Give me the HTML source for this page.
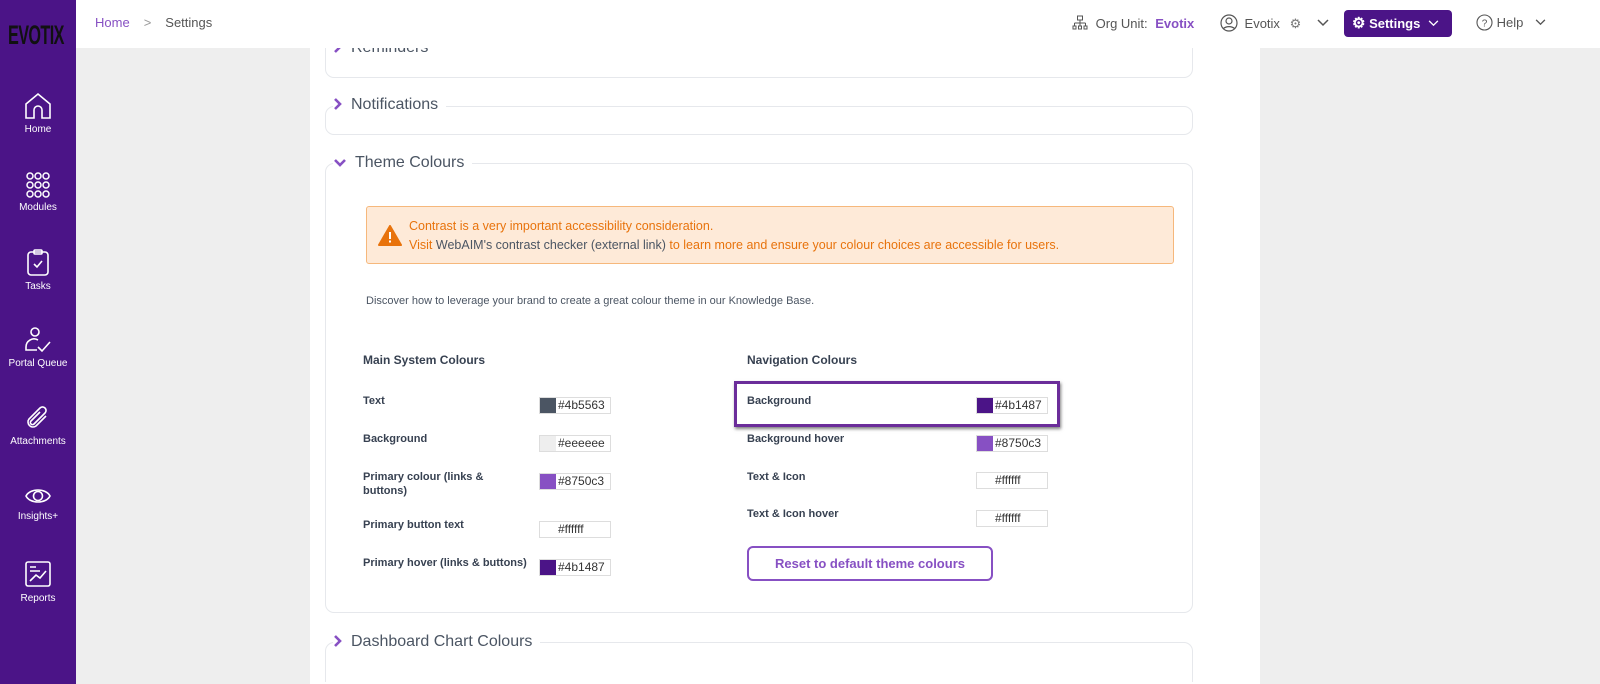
<!DOCTYPE html>
<html><head><meta charset="utf-8"><style>
*{box-sizing:border-box;margin:0;padding:0}
html,body{width:1600px;height:684px;overflow:hidden}
body{font-family:"Liberation Sans",sans-serif;background:#eee;position:relative;color:#4b5563}
#wrap{position:absolute;left:0;top:0;width:1600px;height:684px;overflow:hidden}
.abs{position:absolute}
#side{left:0;top:0;width:76px;height:684px;background:#4b1487;z-index:5}
#hdr{left:76px;top:0;width:1524px;height:48px;background:#fff;z-index:5}
.logo{left:8px;top:22px;font-family:"Liberation Sans",sans-serif;font-weight:bold;font-size:27px;color:#111;letter-spacing:-1px;transform:scaleX(.6);transform-origin:left;line-height:1}
.nav{width:76px;text-align:center;color:#fff;font-size:10px;left:0}
.nav svg{display:block;margin:0 auto 4px}
#panel{left:310px;top:48px;width:950px;height:636px;background:#fff}
.card{position:absolute;left:325px;width:868px;border:1px solid #e6e8ec;border-radius:9px}
.leg{position:absolute;background:#fff;font-size:16px;color:#4b5563;padding-right:8px;line-height:20px}
.chev{display:inline-block;margin-right:8px;vertical-align:-1px}
.lbl{position:absolute;font-size:11px;font-weight:bold;color:#374151}
.sw{position:absolute;width:72px;height:17px;border:1px solid #ddd;background:#fff;font-size:12px;color:#333;padding-left:18px;line-height:15px}
.sw i{position:absolute;left:0;top:0;width:16px;height:15px}
</style></head><body><div id="wrap">
<div id="side" class="abs">
<div class="abs logo">EVOTIX</div>
<div class="abs nav" style="top:92px"><svg width="26" height="28" viewBox="0 0 26 28" fill="none" stroke="#fff" stroke-width="1.6"><path d="M1 12 L13 2 L25 12 V26 H17 V18 a4 4 0 0 0-8 0 V26 H1Z"/></svg>Home</div>
<div class="abs nav" style="top:172px"><svg width="26" height="26" viewBox="0 0 26 26" fill="none" stroke="#fff" stroke-width="1.5"><circle cx="5" cy="4" r="3"/><circle cx="13" cy="4" r="3"/><circle cx="21" cy="4" r="3"/><circle cx="5" cy="13" r="3"/><circle cx="13" cy="13" r="3"/><circle cx="21" cy="13" r="3"/><circle cx="5" cy="22" r="3"/><circle cx="13" cy="22" r="3"/><circle cx="21" cy="22" r="3"/></svg>Modules</div>
<div class="abs nav" style="top:249px"><svg width="24" height="28" viewBox="0 0 24 28" fill="none" stroke="#fff" stroke-width="1.6"><rect x="2" y="3" width="20" height="23" rx="3"/><rect x="8" y="1" width="8" height="4" rx="1"/><path d="M8 15l3 3 5-6"/></svg>Tasks</div>
<div class="abs nav" style="top:326px"><svg width="28" height="28" viewBox="0 0 28 28" fill="none" stroke="#fff" stroke-width="1.6"><circle cx="11" cy="6" r="4"/><path d="M13 24H2v-3a8 8 0 0 1 12-7"/><path d="M14 21l4 4 8-9"/></svg>Portal Queue</div>
<div class="abs nav" style="top:404px"><svg width="28" height="28" viewBox="0 0 28 28" fill="none" stroke="#fff" stroke-width="1.6"><path d="M22 12L12 22a5 5 0 0 1-7-7L16 4a3.5 3.5 0 0 1 5 5L10 20a2 2 0 0 1-3-3l9-9"/></svg>Attachments</div>
<div class="abs nav" style="top:485px"><svg width="28" height="22" viewBox="0 0 28 22" fill="none" stroke="#fff" stroke-width="1.6"><path d="M2 11C6 3 22 3 26 11 22 19 6 19 2 11Z"/><circle cx="14" cy="11" r="4.5"/></svg>Insights+</div>
<div class="abs nav" style="top:561px"><svg width="26" height="28" viewBox="0 0 26 28" fill="none" stroke="#fff" stroke-width="1.6"><rect x="1" y="1" width="24" height="24" rx="2"/><path d="M5 6h6M5 10h10M5 20l6-6 4 3 6-7"/></svg>Reports</div>
</div>
<div id="hdr" class="abs">
<div class="abs" style="left:19px;top:15px;font-size:13px"><span style="color:#8750c3">Home</span><span style="color:#999;margin:0 14px">&gt;</span><span style="color:#555">Settings</span></div>
<div class="abs" style="left:996px;top:14px;font-size:13px;color:#555;white-space:nowrap">
<svg width="16" height="16" viewBox="0 0 16 16" fill="none" stroke="#555" stroke-width="1" style="vertical-align:-3px"><rect x="5.5" y="1" width="5" height="4"/><path d="M8 5v3M2.5 8h11M2.5 8v3M8 8v3M13.5 8v3"/><rect x="1" y="11" width="3" height="3"/><rect x="6.5" y="11" width="3" height="3"/><rect x="12" y="11" width="3" height="3"/></svg>
<span style="margin-left:4px">Org Unit:</span> <b style="color:#8750c3;margin-left:4px">Evotix</b>
<svg width="18" height="18" viewBox="0 0 18 18" fill="none" stroke="#555" stroke-width="1.2" style="vertical-align:-4px;margin-left:22px"><circle cx="9" cy="9" r="8"/><circle cx="9" cy="7" r="3"/><path d="M3.5 14.5a7 5 0 0 1 11 0"/></svg>
<span style="margin-left:3px">Evotix</span>
<span style="margin-left:6px;color:#777">⚙</span>
<svg width="12" height="8" viewBox="0 0 12 8" style="margin-left:12px;vertical-align:1px" fill="none" stroke="#555" stroke-width="1.5"><path d="M1 1l5 5 5-5"/></svg>
</div>
<div class="abs" style="left:1268px;top:10px;width:108px;height:27px;background:#4b1487;border-radius:4px;color:#fff;font-weight:bold;font-size:13px;line-height:27px;padding-left:8px"><span style="font-size:15px">⚙</span> Settings <svg width="11" height="7" viewBox="0 0 12 8" style="margin-left:4px;vertical-align:1px" fill="none" stroke="#fff" stroke-width="1.5"><path d="M1 1l5 5 5-5"/></svg></div>
<div class="abs" style="left:1400px;top:14px;font-size:13px;color:#555"><svg width="17" height="17" viewBox="0 0 17 17" fill="none" stroke="#555" stroke-width="1.1" style="vertical-align:-4px"><circle cx="8.5" cy="8.5" r="7.5"/><text x="8.5" y="12.5" font-size="10" text-anchor="middle" fill="#555" stroke="none" font-family="Liberation Sans">?</text></svg> Help <svg width="11" height="7" viewBox="0 0 12 8" style="margin-left:8px;vertical-align:1px" fill="none" stroke="#555" stroke-width="1.5"><path d="M1 1l5 5 5-5"/></svg></div>
</div>
<div id="panel" class="abs"></div>
<div class="card" style="top:20px;height:58px"></div>
<div class="leg" style="left:333px;top:38px;"><svg class="chev" width="10" height="12" viewBox="0 0 10 12"><path d="M2 1l5 5-5 5" fill="none" stroke="#8750c3" stroke-width="2.6"/></svg>Reminders</div>
<div class="card" style="top:106px;height:29px"></div>
<div class="leg" style="left:333px;top:95px"><svg class="chev" width="10" height="12" viewBox="0 0 10 12"><path d="M2 1l5 5-5 5" fill="none" stroke="#8750c3" stroke-width="2.6"/></svg>Notifications</div>
<div class="card" style="top:163px;height:450px"></div>
<div class="leg" style="left:333px;top:153px"><svg class="chev" width="14" height="10" viewBox="0 0 14 10"><path d="M2 2l5 5 5-5" fill="none" stroke="#8750c3" stroke-width="2.6"/></svg>Theme Colours</div>
<div class="abs" style="left:366px;top:206px;width:808px;height:58px;background:#feead8;border:1px solid #f6b87c;border-radius:3px;font-size:12.5px;color:#e8730c;line-height:19px;padding:10px 0 0 42px">
<svg class="abs" style="left:11px;top:18px" width="24" height="21" viewBox="0 0 24 21"><path d="M12 1L23 20H1Z" fill="#e8730c" stroke="#e8730c" stroke-linejoin="round" stroke-width="2"/><rect x="11" y="7" width="2" height="7" fill="#fff"/><rect x="11" y="15.5" width="2" height="2" fill="#fff"/></svg>
Contrast is a very important accessibility consideration.<br>Visit <span style="color:#4b5563">WebAIM's contrast checker (external link)</span> to learn more and ensure your colour choices are accessible for users.</div>
<div class="abs" style="left:366px;top:295px;font-size:11px;color:#4b5563">Discover how to leverage your brand to create a great colour theme in our Knowledge Base.</div>
<div class="lbl" style="left:363px;top:353px;font-size:12px">Main System Colours</div>
<div class="lbl" style="left:747px;top:353px;font-size:12px">Navigation Colours</div>
<div class="lbl" style="left:363px;top:395px">Text</div>
<div class="sw" style="left:539px;top:397px"><i style="background:#4b5563"></i>#4b5563</div>
<div class="lbl" style="left:363px;top:433px">Background</div>
<div class="sw" style="left:539px;top:435px"><i style="background:#eee"></i>#eeeeee</div>
<div class="lbl" style="left:363px;top:470px;line-height:14px">Primary colour (links &amp;<br>buttons)</div>
<div class="sw" style="left:539px;top:473px"><i style="background:#8750c3"></i>#8750c3</div>
<div class="lbl" style="left:363px;top:519px">Primary button text</div>
<div class="sw" style="left:539px;top:521px"><i></i>#ffffff</div>
<div class="lbl" style="left:363px;top:557px">Primary hover (links &amp; buttons)</div>
<div class="sw" style="left:539px;top:559px"><i style="background:#4b1487"></i>#4b1487</div>
<div class="abs" style="left:734px;top:381px;width:326px;height:46px;border:3px solid #6b2d9a;box-shadow:1px 2px 3px rgba(0,0,0,.5)"></div>
<div class="lbl" style="left:747px;top:395px">Background</div>
<div class="sw" style="left:976px;top:397px"><i style="background:#4b1487"></i>#4b1487</div>
<div class="lbl" style="left:747px;top:433px">Background hover</div>
<div class="sw" style="left:976px;top:435px"><i style="background:#8750c3"></i>#8750c3</div>
<div class="lbl" style="left:747px;top:471px">Text &amp; Icon</div>
<div class="sw" style="left:976px;top:472px"><i></i>#ffffff</div>
<div class="lbl" style="left:747px;top:508px">Text &amp; Icon hover</div>
<div class="sw" style="left:976px;top:510px"><i></i>#ffffff</div>
<div class="abs" style="left:747px;top:546px;width:246px;height:35px;border:2px solid #8750c3;border-radius:6px;color:#8750c3;font-weight:bold;font-size:13px;text-align:center;line-height:31px">Reset to default theme colours</div>
<div class="card" style="top:642px;height:40px;border-bottom:none;border-radius:9px 9px 0 0"></div>
<div class="leg" style="left:333px;top:632px"><svg class="chev" width="10" height="12" viewBox="0 0 10 12"><path d="M2 1l5 5-5 5" fill="none" stroke="#8750c3" stroke-width="2.6"/></svg>Dashboard Chart Colours</div>
</div></body></html>
